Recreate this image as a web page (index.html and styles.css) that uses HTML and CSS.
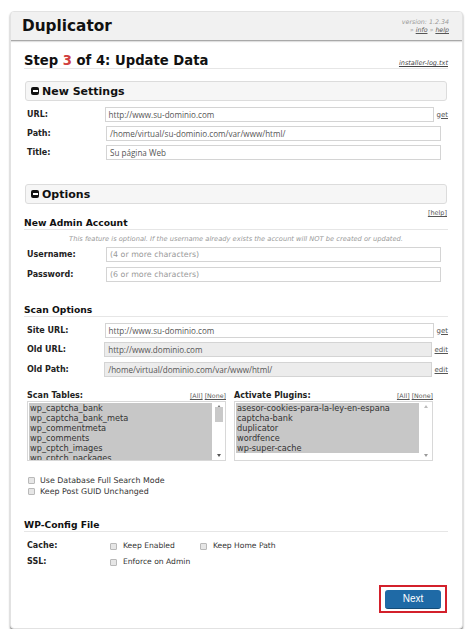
FILE: index.html
```html
<!DOCTYPE html>
<html>
<head>
<meta charset="utf-8">
<link rel="stylesheet" href="styles.css">
</head>
<body>
<div class="card">
  <div class="hdr">
    <div class="brand">Duplicator</div>
    <div class="ver">version: 1.2.34<br>» <span class="lnk">info</span> » <span class="lnk">help</span></div>
  </div>
  <div class="main">
    <div class="step">
      <div class="step-title">Step <span class="red">3</span> of 4: Update Data</div>
      <span class="lnk log">installer-log.txt</span>
    </div>

    <div class="box"><span class="minus"></span>New Settings</div>
    <div class="row first"><div class="lbl">URL:</div><div class="inp">http://www.su-dominio.com</div><span class="lnk side">get</span></div>
    <div class="row"><div class="lbl">Path:</div><div class="inp">/home/virtual/su-dominio.com/var/www/html/</div></div>
    <div class="row"><div class="lbl">Title:</div><div class="inp">Su página Web</div></div>

    <div class="box box2"><span class="minus"></span>Options</div>
    <div class="helprow"><span class="lnk">[help]</span></div>
    <div class="subhead">New Admin Account</div>
    <div class="note">This feature is optional. If the username already exists the account will NOT be created or updated.</div>
    <div class="row r-user"><div class="lbl">Username:</div><div class="inp ph">(4 or more characters)</div></div>
    <div class="row r-pass"><div class="lbl">Password:</div><div class="inp ph">(6 or more characters)</div></div>

    <div class="subhead sh-scan">Scan Options</div>
    <div class="row first"><div class="lbl">Site URL:</div><div class="inp">http://www.su-dominio.com</div><span class="lnk side">get</span></div>
    <div class="row"><div class="lbl">Old URL:</div><div class="inp ro">http://www.dominio.com</div><span class="lnk side">edit</span></div>
    <div class="row r5"><div class="lbl">Old Path:</div><div class="inp ro">/home/virtual/dominio.com/var/www/html/</div><span class="lnk side">edit</span></div>

    <div class="lists">
      <div class="col">
        <div class="colhead"><span class="clbl">Scan Tables:</span><span class="allnone"><span class="lnk">[All]</span> <span class="lnk">[None]</span></span></div>
        <div class="listbox">
          <div class="items">
            <div class="it sel">wp_captcha_bank</div>
            <div class="it sel">wp_captcha_bank_meta</div>
            <div class="it sel">wp_commentmeta</div>
            <div class="it sel">wp_comments</div>
            <div class="it sel">wp_cptch_images</div>
            <div class="it sel">wp_cptch_packages</div>
          </div>
          <div class="sb"><span class="up"></span><span class="thumb"></span><span class="down"></span></div>
        </div>
      </div>
      <div class="col">
        <div class="colhead"><span class="clbl">Activate Plugins:</span><span class="allnone"><span class="lnk">[All]</span> <span class="lnk">[None]</span></span></div>
        <div class="listbox">
          <div class="items">
            <div class="it sel">asesor-cookies-para-la-ley-en-espana</div>
            <div class="it sel">captcha-bank</div>
            <div class="it sel">duplicator</div>
            <div class="it sel">wordfence</div>
            <div class="it sel">wp-super-cache</div>
          </div>
          <div class="sb light"><span class="up"></span><span class="down"></span></div>
        </div>
      </div>
    </div>

    <div class="chk c1"><span class="cb"></span>Use Database Full Search Mode</div>
    <div class="chk"><span class="cb"></span>Keep Post GUID Unchanged</div>

    <div class="subhead sh-wp">WP-Config File</div>
    <div class="crow c-cache"><div class="lbl2">Cache:</div><span class="cb"></span><span class="ct">Keep Enabled</span><span class="cb cb2"></span><span class="ct">Keep Home Path</span></div>
    <div class="crow c-ssl"><div class="lbl2">SSL:</div><span class="cb"></span><span class="ct">Enforce on Admin</span></div>

    <div class="btnrow"><div class="hl"><div class="btn">Next</div></div></div>
  </div>
</div>
</body>
</html>
```
FILE: styles.css
```css
html, body { margin: 0; padding: 0; background: #fff; }
body { font-family: "DejaVu Sans", Verdana, sans-serif; color: #222; }

.card {
  margin: 11px 0 0 10px;
  width: 453px;
  height: 618px;
  box-sizing: border-box;
  border: 1px solid #e2e2e2;
  border-radius: 4px;
  box-shadow: 0 2px 2px rgba(0,0,0,0.45);
  background: #fff;
  overflow: hidden;
}

.hdr {
  height: 29px;
  box-sizing: border-box;
  background: #f1f1f1;
  border-bottom: 1px solid #a9a9a9;
  box-shadow: 0 1px 1px rgba(0,0,0,0.12);
  display: flex;
  justify-content: space-between;
  align-items: center;
  padding: 0 13px 0 11px;
}
.brand { font-size: 15.3px; font-weight: bold; color: #111; letter-spacing: 0; }
.ver { font-size: 6.3px; font-style: italic; color: #999; text-align: right; line-height: 8.5px; }

.lnk { text-decoration: underline; color: #555; }

.main { padding: 0 14px 0 13px; }

.step {
  margin-top: 12px;
  height: 16px;
  box-sizing: border-box;
  border-bottom: 1px solid #e6e6e6;
  display: flex;
  justify-content: space-between;
  align-items: baseline;
  line-height: 15px;
}
.step-title { font-size: 13.2px; font-weight: bold; color: #111; }
.red { color: #d04040; }
.log { font-size: 6.5px; font-style: italic; color: #444; }

.box {
  margin: 12px 1px 0 1px;
  height: 20px;
  box-sizing: border-box;
  border: 1px solid #dcdcdc;
  border-radius: 3px;
  background: #f6f6f6;
  display: flex;
  align-items: center;
  padding-left: 5px;
  font-size: 11px;
  font-weight: bold;
  color: #111;
}
.box2 { margin-top: 24px; }
.minus {
  width: 8px; height: 8px;
  background: #111;
  border-radius: 2px;
  margin-right: 3px;
  display: flex; align-items: center; justify-content: center;
}
.minus::after { content: ""; width: 5px; height: 1.5px; background: #fff; }

.row {
  display: flex;
  align-items: center;
  height: 15px;
  margin-top: 4px;
}
.row.first { margin-top: 6px; }
.row.r5 { margin-top: 5px; }
.lbl {
  width: 79px;
  padding-left: 3px;
  font-size: 8px;
  font-weight: bold;
  color: #222;
}
.inp {
  width: 335px;
  height: 15px;
  box-sizing: border-box;
  border: 1px solid #d4d4d4;
  background: #fff;
  padding-left: 3px;
  font-family: "Open Sans", "DejaVu Sans", sans-serif;
  font-size: 8.1px;
  line-height: 13px;
  color: #555;
  white-space: nowrap;
  overflow: hidden;
}
.inp.ro { background: #ececec; }
.inp.ph { font-family: "DejaVu Sans", sans-serif; font-size: 7.9px; color: #999; }
.side { font-size: 7px; margin-left: 3px; color: #555; }

.helprow { text-align: right; margin-top: 5px; line-height: 8px; font-size: 6.5px; padding-right: 1px; }
.subhead {
  height: 13px;
  box-sizing: border-box;
  border-bottom: 1px solid #e6e6e6;
  font-size: 9.2px;
  font-weight: bold;
  line-height: 11px;
  color: #111;
}
.note { text-align: center; font-size: 6.7px; font-style: italic; color: #999; margin-top: 5px; line-height: 9px; white-space: nowrap; }
.r-user { margin-top: 3px; }
.r-pass { margin-top: 5px; }
.sh-scan { margin-top: 22px; }

.lists { display: flex; gap: 8px; padding-left: 3px; margin-top: 14px; }
.col { width: 199px; }
.colhead { display: flex; justify-content: space-between; align-items: baseline; line-height: 9px; height: 10px; }
.clbl { font-size: 8px; font-weight: bold; color: #222; }
.allnone { font-size: 6.3px; }
.listbox {
  height: 60px;
  box-sizing: border-box;
  border: 1px solid #d8d8d8;
  display: flex;
  overflow: hidden;
  background: #fff;
}
.items { flex: 1; padding: 1px 2px 0 1px; overflow: hidden; }
.it { font-size: 8.2px; line-height: 10px; color: #333; padding-left: 1px; white-space: nowrap; }
.it.sel { background: #c7c7c7; }
.sb { width: 11px; position: relative; background: #fff; }
.sb .up, .sb .down {
  position: absolute; left: 3px; width: 0; height: 0;
  border-left: 2px solid transparent; border-right: 2px solid transparent;
}
.sb .up { top: 3px; border-bottom: 3px solid #777; }
.sb .down { bottom: 3px; border-top: 3px solid #555; }
.sb .thumb { position: absolute; left: 1px; top: 5px; width: 8px; height: 15px; background: #c9c9c9; }
.sb.light .up { border-bottom-color: #bbb; }
.sb.light .down { border-top-color: #999; }

.chk { display: flex; align-items: center; line-height: 11px; font-size: 7.9px; color: #333; padding-left: 4px; }
.chk.c1 { margin-top: 14px; }
.cb {
  width: 7px; height: 7px; box-sizing: border-box;
  border: 1px solid #b9b9b9; border-radius: 1px;
  background: #e6e6e6;
  margin-right: 5px;
  display: inline-block;
}
.sh-wp { margin-top: 22px; }
.crow { display: flex; align-items: center; line-height: 12px; font-size: 7.6px; color: #333; }
.c-cache { margin-top: 8px; }
.c-ssl { margin-top: 4px; }
.lbl2 { width: 83px; padding-left: 3px; font-size: 8px; font-weight: bold; color: #222; }
.ct { margin-left: 1px; }
.cb2 { margin-left: 25px; }

.btnrow { display: flex; justify-content: flex-end; margin-top: 17px; padding-right: 1px; }
.hl { border: 2px solid #d3202b; padding: 3px 4px 2px 4px; }
.btn {
  width: 56px; height: 19px; box-sizing: border-box;
  background: #1f6aa6;
  border-bottom: 1px solid #144c78;
  border-radius: 3px;
  color: #fff;
  font-family: "Liberation Sans", Arial, sans-serif;
  font-size: 10px;
  line-height: 18px;
  text-align: center;
}
```
